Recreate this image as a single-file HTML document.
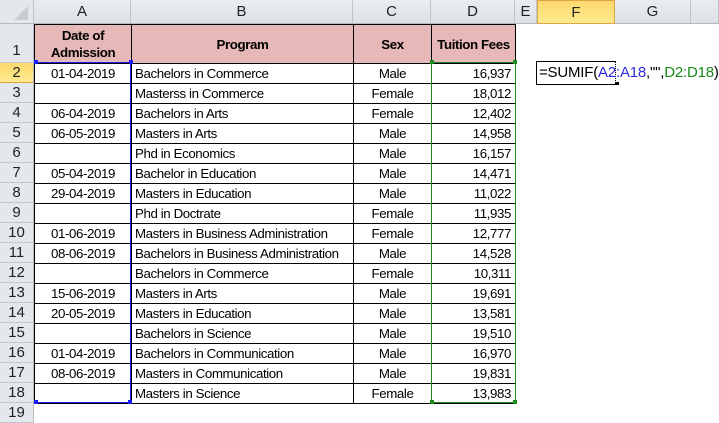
<!DOCTYPE html>
<html><head><meta charset="utf-8"><style>
*{margin:0;padding:0;box-sizing:border-box}
body{width:719px;height:423px;overflow:hidden;background:#fff;font-family:"Liberation Sans",sans-serif;font-size:13.3px;color:#000;position:relative}
.ch{position:absolute;top:0;height:24px;background:linear-gradient(#e9ecf0,#dde1e6);border-right:1px solid #c0c4ca;border-bottom:1px solid #b5b9bf;text-align:center;line-height:24px;font-size:15px;color:#222}
.rh{position:absolute;left:0;width:34px;background:#e4e7eb;border-bottom:1px solid #c3c6cb;border-right:1px solid #b5b9bf;text-align:center;font-size:15px;color:#222;line-height:20px}
table{position:absolute;left:34px;top:24px;border-collapse:collapse;table-layout:fixed}
td{border:1px solid #000;height:20px;padding:0 3px;white-space:nowrap;overflow:hidden;line-height:18px;letter-spacing:-0.4px}
td.b{text-align:left}
td.c{text-align:center}
td.d{text-align:right;padding-right:4px}
tr.h td{background:#e6b8b7;font-weight:bold;text-align:center;height:39px;line-height:17px}
.l{position:absolute;z-index:5}
.s{position:absolute;z-index:6;width:5px;height:5px}
</style></head><body>
<div class="ch" style="left:0;width:34px;background:#e4e7eb"><svg width="34" height="24"><polygon points="28,6 28,20 14,20" fill="#c9ccd0"/></svg></div>
<div class="ch" style="left:34px;width:97px">A</div>
<div class="ch" style="left:131px;width:222px">B</div>
<div class="ch" style="left:353px;width:78px">C</div>
<div class="ch" style="left:431px;width:84px">D</div>
<div class="ch" style="left:515px;width:22px">E</div>
<div class="ch" style="left:537px;width:78px;background:linear-gradient(#fcd96d,#fde98f);border:1px solid #e0a642">F</div>
<div class="ch" style="left:615px;width:76px">G</div>
<div class="ch" style="left:691px;width:28px"></div>

<div class="rh" style="top:24px;height:39px;line-height:54px">1</div>
<div class="rh" style="top:63px;height:20px;background:linear-gradient(#fcd96d,#fde98f);border-bottom:1px solid #e0a642">2</div>
<div class="rh" style="top:83px;height:20px">3</div>
<div class="rh" style="top:103px;height:20px">4</div>
<div class="rh" style="top:123px;height:20px">5</div>
<div class="rh" style="top:143px;height:20px">6</div>
<div class="rh" style="top:163px;height:20px">7</div>
<div class="rh" style="top:183px;height:20px">8</div>
<div class="rh" style="top:203px;height:20px">9</div>
<div class="rh" style="top:223px;height:20px">10</div>
<div class="rh" style="top:243px;height:20px">11</div>
<div class="rh" style="top:263px;height:20px">12</div>
<div class="rh" style="top:283px;height:20px">13</div>
<div class="rh" style="top:303px;height:20px">14</div>
<div class="rh" style="top:323px;height:20px">15</div>
<div class="rh" style="top:343px;height:20px">16</div>
<div class="rh" style="top:363px;height:20px">17</div>
<div class="rh" style="top:383px;height:20px">18</div>
<div class="rh" style="top:403px;height:20px">19</div>

<table>
<colgroup><col style="width:97px"><col style="width:222px"><col style="width:78px"><col style="width:84px"></colgroup>
<tr class="h"><td>Date of<br>Admission</td><td>Program</td><td>Sex</td><td>Tuition Fees</td></tr>
<tr><td class="c">01-04-2019</td><td class="b">Bachelors in Commerce</td><td class="c">Male</td><td class="d">16,937</td></tr>
<tr><td class="c"></td><td class="b">Masterss in Commerce</td><td class="c">Female</td><td class="d">18,012</td></tr>
<tr><td class="c">06-04-2019</td><td class="b">Bachelors in Arts</td><td class="c">Female</td><td class="d">12,402</td></tr>
<tr><td class="c">06-05-2019</td><td class="b">Masters in Arts</td><td class="c">Male</td><td class="d">14,958</td></tr>
<tr><td class="c"></td><td class="b">Phd in Economics</td><td class="c">Male</td><td class="d">16,157</td></tr>
<tr><td class="c">05-04-2019</td><td class="b">Bachelor in Education</td><td class="c">Male</td><td class="d">14,471</td></tr>
<tr><td class="c">29-04-2019</td><td class="b">Masters in Education</td><td class="c">Male</td><td class="d">11,022</td></tr>
<tr><td class="c"></td><td class="b">Phd in Doctrate</td><td class="c">Female</td><td class="d">11,935</td></tr>
<tr><td class="c">01-06-2019</td><td class="b">Masters in Business Administration</td><td class="c">Female</td><td class="d">12,777</td></tr>
<tr><td class="c">08-06-2019</td><td class="b">Bachelors in Business Administration</td><td class="c">Male</td><td class="d">14,528</td></tr>
<tr><td class="c"></td><td class="b">Bachelors in Commerce</td><td class="c">Female</td><td class="d">10,311</td></tr>
<tr><td class="c">15-06-2019</td><td class="b">Masters in Arts</td><td class="c">Male</td><td class="d">19,691</td></tr>
<tr><td class="c">20-05-2019</td><td class="b">Masters in Education</td><td class="c">Male</td><td class="d">13,581</td></tr>
<tr><td class="c"></td><td class="b">Bachelors in Science</td><td class="c">Male</td><td class="d">19,510</td></tr>
<tr><td class="c">01-04-2019</td><td class="b">Bachelors in Communication</td><td class="c">Male</td><td class="d">16,970</td></tr>
<tr><td class="c">08-06-2019</td><td class="b">Masters in Communication</td><td class="c">Male</td><td class="d">19,831</td></tr>
<tr><td class="c"></td><td class="b">Masters in Science</td><td class="c">Female</td><td class="d">13,983</td></tr>
</table>

<div class="l" style="left:34px;top:62px;width:97px;height:1px;background:#1a1aff"></div>
<div class="l" style="left:34px;top:402px;width:97px;height:1px;background:#1a1aff"></div>
<div class="l" style="left:130px;top:63px;width:1px;height:340px;background:#1a1aff"></div>
<div class="s" style="left:34px;top:60px;width:4px;height:4px;background:#1a1aff"></div>
<div class="s" style="left:129px;top:60px;width:4px;height:4px;background:#1a1aff"></div>
<div class="s" style="left:34px;top:400px;width:4px;height:4px;background:#1a1aff"></div>
<div class="s" style="left:128px;top:400px;width:4px;height:4px;background:#1a1aff"></div>

<div class="l" style="left:431px;top:62px;width:85px;height:1px;background:#1a8a1a"></div>
<div class="l" style="left:431px;top:402px;width:85px;height:1px;background:#1a8a1a"></div>
<div class="l" style="left:431px;top:63px;width:1px;height:340px;background:#1a8a1a"></div>
<div class="l" style="left:515px;top:63px;width:1px;height:340px;background:#1a8a1a"></div>
<div class="s" style="left:430px;top:60px;width:4px;height:4px;background:#1a8a1a"></div>
<div class="s" style="left:513px;top:60px;width:4px;height:4px;background:#1a8a1a"></div>
<div class="s" style="left:430px;top:400px;width:4px;height:4px;background:#1a8a1a"></div>
<div class="s" style="left:513px;top:400px;width:4px;height:4px;background:#1a8a1a"></div>

<div style="position:absolute;left:536px;top:61px;width:80px;height:24px;border:1px solid #000;border-right:1px dotted #000"></div>
<div style="position:absolute;left:615px;top:82px;width:4px;height:3px;background:#000"></div>
<div style="position:absolute;left:539px;top:64px;font-size:15px;line-height:18px;white-space:nowrap;letter-spacing:-0.2px">=SUMIF(<span style="color:#2b2bd9">A2:A18</span>,"",<span style="color:#1a8a1a">D2:D18</span>)</div>
</body></html>
